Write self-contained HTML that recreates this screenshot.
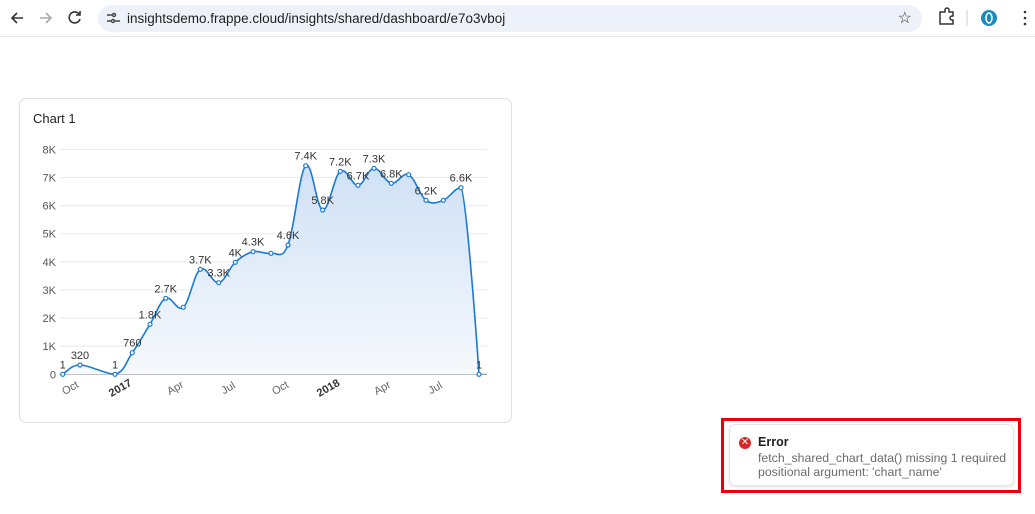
<!DOCTYPE html>
<html><head><meta charset="utf-8"><style>
body{margin:0;width:1035px;height:514px;background:#fff;font-family:"Liberation Sans",sans-serif;position:relative;overflow:hidden}
.bar{position:absolute;left:0;top:0;width:1035px;height:36px;border-bottom:1px solid #e5e5e5;background:#fff}
.url{position:absolute;left:98px;top:5px;width:824px;height:27px;border-radius:14px;background:#edf1f9}
.url span{position:absolute;left:29px;top:6px;font-size:13.5px;color:#1f1f1f}
.card{position:absolute;left:19px;top:98px;width:491px;height:323px;border:1px solid #e0e0e0;border-radius:7px}
.title{position:absolute;left:33px;top:111px;font-size:13px;color:#222}
.redbox{position:absolute;left:721px;top:418px;width:294px;height:69px;border:3px solid #e8000b}
.toast{position:absolute;left:729px;top:424px;width:283px;height:60px;border:1px solid #e5e5e5;border-radius:6px;box-shadow:0 1px 3px rgba(0,0,0,.12);background:#fff}
.toast .h{position:absolute;left:28px;top:10px;font-size:12.5px;font-weight:bold;color:#222}
.toast .m{position:absolute;left:28px;top:26px;font-size:12.3px;color:#6b6b6b;line-height:14px}
.ic{position:absolute;left:9px;top:12px;width:12px;height:12px;border-radius:50%;background:#d9262b;color:#fff;font-size:10px;line-height:12px;text-align:center}
</style></head><body>
<div class="bar">
<svg width="95" height="36" style="position:absolute;left:0;top:0" fill="none" stroke-width="1.6">
<path d="M23 18H12M17 13l-5 5 5 5" stroke="#333"/>
<path d="M40 18h11M46 13l5 5-5 5" stroke="#aaa"/>
<path d="M79 14a5.5 5.5 0 1 0 1 5M80 11v4h-4" stroke="#333"/>
</svg>
<div class="url"><svg width="20" height="27" style="position:absolute;left:6px;top:0" stroke="#444" stroke-width="1.4" fill="none"><path d="M3 10h6M11 10h0M3 16h4M11 16h5"/><circle cx="10" cy="10" r="1.5"/><circle cx="9" cy="16" r="1.5"/></svg><span>insightsdemo.frappe.cloud/insights/shared/dashboard/e7o3vboj</span>
<div style="position:absolute;right:10px;top:3px;font-size:16px;color:#333">☆</div></div>
<svg width="100" height="36" style="position:absolute;left:935px;top:0" fill="none" stroke="#333" stroke-width="1.5">
<path d="M5 12h5v-2a2 2 0 0 1 4 0v2h4v4h-1a2 2 0 0 0 0 4h1v4H5z"/>
<line x1="32" y1="10" x2="32" y2="26" stroke="#ddd"/>
<circle cx="54" cy="18" r="8" fill="#1a8bbf" stroke="none"/><ellipse cx="54" cy="18" rx="3" ry="5" stroke="#fff"/>
<circle cx="90" cy="12" r="1.3" fill="#333" stroke="none"/><circle cx="90" cy="18" r="1.3" fill="#333" stroke="none"/><circle cx="90" cy="24" r="1.3" fill="#333" stroke="none"/>
</svg>
</div>
<div class="card"></div>
<div class="title">Chart 1</div>
<svg id="ch" width="1035" height="514" style="position:absolute;left:0;top:0" font-family="Liberation Sans, sans-serif"></svg>
<div class="redbox"></div>
<div class="toast"><div class="ic">✕</div><div class="h">Error</div><div class="m">fetch_shared_chart_data() missing 1 required<br>positional argument: 'chart_name'</div></div>
<script>
var xs=[62.7,80,115,132.3,150,165.7,183.3,200.3,218.7,235.3,253,271,288,305.7,322.7,340.3,358,374,391.3,408.7,426,443.3,461,479];
var ys=[374.3,365,374.3,352.7,324.3,298.3,307.3,269.3,282.7,262.3,251.7,253.3,245,165.7,210,171.3,185.3,168.3,183.3,174.7,200.3,200.3,187.7,374.3];
var lb={0:"1",1:"320",2:"1",3:"760",4:"1.8K",5:"2.7K",7:"3.7K",8:"3.3K",9:"4K",10:"4.3K",12:"4.6K",13:"7.4K",14:"5.8K",15:"7.2K",16:"6.7K",17:"7.3K",18:"6.8K",20:"6.2K",22:"6.6K",23:"1"};
var s='<defs><linearGradient id="g" x1="0" y1="0" x2="0" y2="1"><stop offset="0" stop-color="#cfe1f5"/><stop offset="1" stop-color="#f6f9fd"/></linearGradient></defs>';
for(var k=0;k<=8;k++){var y=374.3-k*28.12;s+='<line x1="60" x2="487" y1="'+y+'" y2="'+y+'" stroke="'+(k?'#e6eaf2':'#888')+'"/>';s+='<text x="56" y="'+(y+4)+'" font-size="11" fill="#555" text-anchor="end">'+(k?k+'K':'0')+'</text>';}
var d='M'+xs[0]+','+ys[0];
for(var i=0;i<xs.length-1;i++){var p0=i?i-1:i,p3=i+2<xs.length?i+2:i+1,t=0.18;
var c1x=xs[i]+(xs[i+1]-xs[p0])*t,c1y=ys[i]+(ys[i+1]-ys[p0])*t,c2x=xs[i+1]-(xs[p3]-xs[i])*t,c2y=ys[i+1]-(ys[p3]-ys[i])*t;
if(i==22){c1x=xs[i]+4;c1y=ys[i];c2x=xs[i+1]-4;c2y=ys[i+1]-60;}
if(i==21){c2y=ys[i+1];}
c1y=Math.min(c1y,374.3);c2y=Math.min(c2y,374.3);
d+=' C'+c1x+','+c1y+' '+c2x+','+c2y+' '+xs[i+1]+','+ys[i+1];}
s+='<path d="'+d+' L479,374.3 L62.7,374.3Z" fill="url(#g)"/><path d="'+d+'" fill="none" stroke="#1a7ad4" stroke-width="1.6"/>';
for(i=0;i<xs.length;i++){s+='<circle cx="'+xs[i]+'" cy="'+ys[i]+'" r="2" fill="#fff" stroke="#1a7ad4" stroke-width="1.2"/>';if(lb[i])s+='<text x="'+xs[i]+'" y="'+(ys[i]-6)+'" font-size="11" fill="#333" text-anchor="middle">'+lb[i]+'</text>';}
var xl=[[72,"Oct",0],[122,"2017",1],[177,"Apr",0],[230,"Jul",0],[282,"Oct",0],[330,"2018",1],[384,"Apr",0],[437,"Jul",0]];
xl.forEach(function(a){s+='<text transform="translate('+a[0]+',391) rotate(-30)" font-size="11" text-anchor="middle" fill="'+(a[2]?'#333':'#666')+'"'+(a[2]?' font-weight="bold"':'')+'>'+a[1]+'</text>';});
document.getElementById('ch').innerHTML=s;
</script>
</body></html>
